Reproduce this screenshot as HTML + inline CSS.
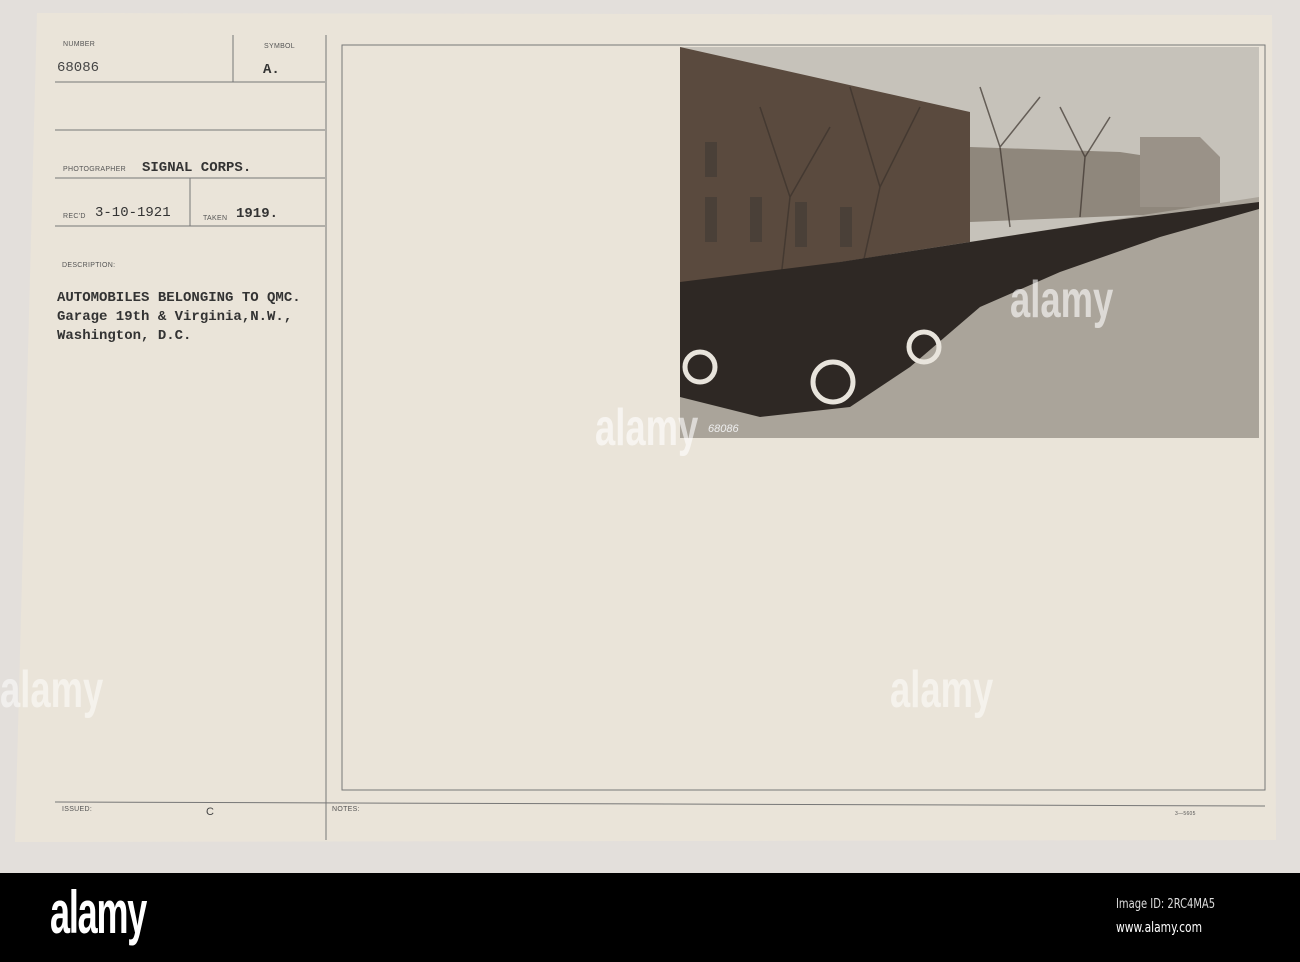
<!DOCTYPE html>
<html><head><meta charset="utf-8"><style>
html,body{margin:0;padding:0}
body{width:1300px;height:962px;position:relative;overflow:hidden;background:#e3dfdb;font-family:"Liberation Mono",monospace}
.a{position:absolute}
.lbl{font-family:"Liberation Sans",sans-serif;font-size:7px;color:#555;letter-spacing:.3px}
.t{font-family:"Liberation Mono",monospace;font-weight:bold;color:#333;font-size:14px}
.wm{font-family:"Liberation Sans",sans-serif;font-weight:bold;color:rgba(255,255,255,.6);transform:scaleX(.7);transform-origin:left top}
.bar{position:absolute;left:0;top:873px;width:1300px;height:89px;background:#000}
</style></head><body>
<svg class="a" style="left:0;top:0" width="1300" height="873">
<polygon points="37,13 1272,15 1276,840 15,842" fill="#eae4d9"/>
<g stroke="#777" stroke-width="1" fill="none">
<line x1="326" y1="35" x2="326" y2="840"/>
<line x1="233" y1="35" x2="233" y2="82"/>
<line x1="55" y1="82" x2="325" y2="82"/>
<line x1="55" y1="130" x2="325" y2="130"/>
<line x1="55" y1="178" x2="325" y2="178"/>
<line x1="190" y1="178" x2="190" y2="226"/>
<line x1="55" y1="226" x2="325" y2="226"/>
<rect x="342" y="45" width="923" height="745"/>
<line x1="55" y1="802" x2="1265" y2="806"/>
</g>
</svg>
<div class="a lbl" style="left:63px;top:41px">NUMBER</div>
<div class="a lbl" style="left:264px;top:43px">SYMBOL</div>
<div class="a t" style="left:57px;top:60px;font-weight:normal;color:#444">68086</div>
<div class="a t" style="left:263px;top:62px">A.</div>
<div class="a lbl" style="left:63px;top:166px">PHOTOGRAPHER</div>
<div class="a t" style="left:142px;top:160px">SIGNAL CORPS.</div>
<div class="a lbl" style="left:63px;top:213px">REC'D</div>
<div class="a t" style="left:95px;top:205px;font-weight:normal;color:#333">3-10-1921</div>
<div class="a lbl" style="left:203px;top:215px">TAKEN</div>
<div class="a t" style="left:236px;top:206px">1919.</div>
<div class="a lbl" style="left:62px;top:262px">DESCRIPTION:</div>
<div class="a t" style="left:57px;top:289px;line-height:19px">AUTOMOBILES BELONGING TO QMC.<br>Garage 19th &amp; Virginia,N.W.,<br>Washington, D.C.</div>
<div class="a lbl" style="left:62px;top:806px">ISSUED:</div>
<div class="a lbl" style="left:332px;top:806px">NOTES:</div>
<div class="a" style="left:206px;top:806px;font-family:'Liberation Sans';font-size:11px;color:#444">C</div>
<div class="a lbl" style="left:1175px;top:811px;font-size:5px">3—5605</div>

<svg class="a" style="left:680px;top:47px" width="579" height="391" viewBox="0 0 579 391">
<rect width="579" height="391" fill="#c6c2ba"/>
<polygon points="0,0 290,65 290,225 0,240" fill="#5a4a3e"/>
<polygon points="290,100 440,105 540,120 540,165 290,175" fill="#8f877c"/>
<polygon points="460,90 520,90 540,110 540,160 460,160" fill="#9a9288"/>
<polygon points="0,240 579,150 579,391 0,391" fill="#aaa49a"/>
<g stroke="#3a322c" stroke-width="1.5" fill="none" opacity=".7">
<path d="M100,240 L110,150 L80,60 M110,150 L150,80 M180,230 L200,140 L170,40 M200,140 L240,60 M330,180 L320,100 L300,40 M320,100 L360,50 M400,170 L405,110 L380,60 M405,110 L430,70"/>
</g>
<polygon points="0,235 160,215 420,175 579,155 579,162 480,190 380,225 300,260 230,320 170,360 80,370 0,350" fill="#2e2824"/>
<g fill="none" stroke="#e8e4dc" stroke-width="5"><circle cx="20" cy="320" r="15"/><circle cx="153" cy="335" r="20"/><circle cx="244" cy="300" r="15"/></g>
<g fill="#4a4038"><rect x="25" y="95" width="12" height="35"/><rect x="25" y="150" width="12" height="45"/><rect x="70" y="150" width="12" height="45"/><rect x="115" y="155" width="12" height="45"/><rect x="160" y="160" width="12" height="40"/></g>
<text x="28" y="385" font-family="Liberation Sans" font-style="italic" font-size="11" fill="#eee">68086</text>
</svg>

<div class="a wm" style="left:595px;top:398px;font-size:52px">alamy</div>
<div class="a wm" style="left:1010px;top:270px;font-size:52px">alamy</div>
<div class="a wm" style="left:0px;top:660px;font-size:52px;color:rgba(255,255,255,.5)">alamy</div>
<div class="a wm" style="left:890px;top:660px;font-size:52px;color:rgba(255,255,255,.5)">alamy</div>

<div class="bar"></div>
<div class="a" style="left:50px;top:878px;font-family:'Liberation Sans';font-weight:bold;font-size:60px;color:#fff;transform:scaleX(.6);transform-origin:left top;letter-spacing:-2px">alamy</div>
<div class="a" style="left:1116px;top:897px;font-family:'DejaVu Sans Condensed','Liberation Sans';font-size:13px;color:#ddd;transform:scaleX(.85);transform-origin:left top">Image ID: 2RC4MA5</div>
<div class="a" style="left:1116px;top:920px;font-family:'DejaVu Sans Condensed','Liberation Sans';font-size:14px;color:#fff;transform:scaleX(.85);transform-origin:left top">www.alamy.com</div>
</body></html>
